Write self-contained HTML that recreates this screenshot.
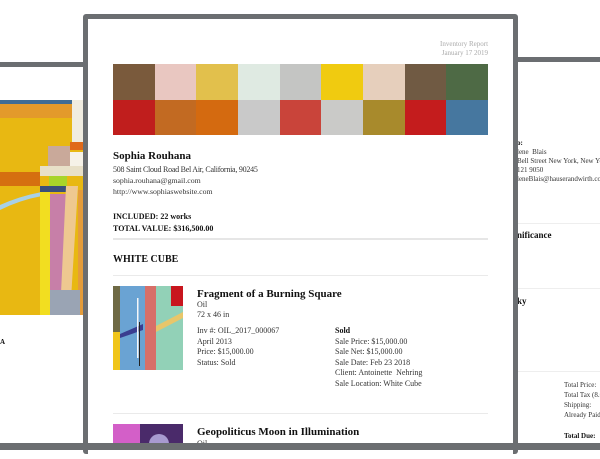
<!DOCTYPE html><html><head><style>
*{margin:0;padding:0;box-sizing:border-box}
body{width:600px;height:450px;overflow:hidden;background:#fff;position:relative;font-family:"Liberation Serif","DejaVu Serif",serif;color:#222}
.a{position:absolute}
.t{position:absolute;white-space:nowrap;font-size:8px;color:#333}
.b{font-weight:bold;color:#111}
</style></head><body>
<!-- left page -->
<div class="a" style="left:0;top:62px;width:86px;height:5px;background:#6b6e71"></div>
<svg class="a" style="left:0;top:100px" width="84" height="215" viewBox="0 0 84 215">
<rect width="84" height="215" fill="#e8b812"/>
<rect y="0" width="72" height="4" fill="#3f6c95"/>
<rect y="4" width="72" height="14" fill="#e39a2b"/>
<rect x="72" y="0" width="12" height="42" fill="#f0ece0"/>
<rect x="70" y="42" width="14" height="8" fill="#e06a1a"/>
<rect x="48" y="46" width="22" height="20" fill="#c9a99a"/>
<rect x="70" y="52" width="14" height="14" fill="#f6f2e8"/>
<rect x="40" y="66" width="44" height="10" fill="#e8e0c8"/>
<rect x="49" y="76" width="18" height="10" fill="#a8d42a"/>
<rect y="72" width="40" height="14" fill="#d56f10"/>
<rect x="40" y="86" width="27" height="6" fill="#3a4f7a"/>
<path d="M0 105 Q20 96 42 92 L42 96 Q20 100 0 110Z" fill="#a8d0e6"/>
<rect x="40" y="92" width="10" height="123" fill="#f2de20"/>
<path d="M50 94 L66 94 L62 215 L50 215Z" fill="#c77fa8"/>
<path d="M66 86 L78 86 L70 215 L60 215Z" fill="#eec890"/>
<rect x="78" y="90" width="6" height="125" fill="#e49c3a"/>
<rect x="50" y="190" width="30" height="25" fill="#9aa4b4"/>
</svg>
<div class="t b" style="left:0;top:338px;font-size:7px">A</div>
<!-- right page -->
<div class="a" style="left:515px;top:57px;width:85px;height:5px;background:#6b6e71"></div>
<div class="t b" style="left:517px;top:139px;font-size:7px">o:</div>
<div class="t" style="left:517px;top:148px;font-size:7px">lene&nbsp; Blais</div>
<div class="t" style="left:517px;top:157px;font-size:7px">Bell Street New York, New York,</div>
<div class="t" style="left:517px;top:166px;font-size:7px">121 9050</div>
<div class="t" style="left:517px;top:175px;font-size:7px">leneBlais@hauserandwirth.com</div>
<div class="a" style="left:518px;top:223px;width:82px;height:1px;background:#eee"></div>
<div class="t b" style="left:517px;top:230px;font-size:9px">nificance</div>
<div class="a" style="left:518px;top:288px;width:82px;height:1px;background:#eee"></div>
<div class="t b" style="left:517px;top:296px;font-size:9px">ky</div>
<div class="a" style="left:518px;top:371px;width:82px;height:1px;background:#eee"></div>
<div class="t" style="left:564px;top:381px;font-size:7px">Total Price:</div>
<div class="t" style="left:564px;top:391px;font-size:7px">Total Tax (8.0</div>
<div class="t" style="left:564px;top:401px;font-size:7px">Shipping:</div>
<div class="t" style="left:564px;top:411px;font-size:7px">Already Paid:</div>
<div class="t b" style="left:564px;top:432px;font-size:7px">Total Due:</div>
<!-- center page -->
<div class="a" style="left:83px;top:14px;width:435px;height:440px;background:#6b6e71;border-radius:3px"></div>
<div class="a" style="left:88px;top:19px;width:425px;height:440px;background:#fff"></div>
<div class="t" style="left:440px;top:40px;font-size:7px;color:#aaa;text-align:right;width:48px;line-height:9px">Inventory Report<br>January 17 2019</div>
<div class="a" style="left:113px;top:64px;width:375px;height:71px;display:grid;grid-template-columns:repeat(9,1fr);grid-template-rows:1fr 1fr">
<div style="background:#7a5a3c"></div><div style="background:#e9c7c1"></div><div style="background:#e2c04c"></div><div style="background:#dfeae2"></div><div style="background:#c4c5c3"></div><div style="background:#f0cb10"></div><div style="background:#e6cfbc"></div><div style="background:#705a43"></div><div style="background:#4e6a45"></div>
<div style="background:#c01e1d"></div><div style="background:#c26a22"></div><div style="background:#d46a10"></div><div style="background:#c9c9c9"></div><div style="background:#c9443a"></div><div style="background:#cacac8"></div><div style="background:#a88a2c"></div><div style="background:#c41c1d"></div><div style="background:#46779f"></div>
</div>
<div class="t b" style="left:113px;top:150px;font-size:11px">Sophia Rouhana</div>
<div class="t" style="left:113px;top:165px;letter-spacing:-0.25px">508 Saint Cloud Road Bel Air, California, 90245</div>
<div class="t" style="left:113px;top:176px;font-size:7.8px">sophia.rouhana@gmail.com</div>
<div class="t" style="left:113px;top:187px;font-size:7.8px">http://www.sophiaswebsite.com</div>
<div class="t b" style="left:113px;top:212px">INCLUDED: 22 works</div>
<div class="t b" style="left:113px;top:224px">TOTAL VALUE: $316,500.00</div>
<div class="a" style="left:113px;top:238px;width:375px;height:2px;background:#e6e6e6"></div>
<div class="t b" style="left:113px;top:254px;font-size:10px">WHITE CUBE</div>
<div class="a" style="left:113px;top:275px;width:375px;height:1px;background:#eaeaea"></div>
<svg class="a" style="left:113px;top:286px" width="70" height="84" viewBox="0 0 70 84">
<rect width="70" height="84" fill="#6aa3d3"/>
<rect width="7" height="84" fill="#6f6a45"/><rect y="46" width="7" height="38" fill="#f0c51a"/>
<rect x="32" width="11" height="84" fill="#d76f68"/>
<rect x="43" width="27" height="84" fill="#92d1b7"/>
<rect x="58" width="12" height="20" fill="#c8161e"/>
<path d="M43 40 L70 26 L70 32 L43 46Z" fill="#e8c66a"/>
<path d="M7 48 L30 38 L30 44 L7 52Z" fill="#3a3d90"/>
<rect x="24" y="12" width="1.5" height="60" fill="#f4f6f8"/><rect x="26" y="36" width="1" height="44" fill="#222"/>
</svg>
<div class="t b" style="left:197px;top:288px;font-size:11px">Fragment of a Burning Square</div>
<div class="t" style="left:197px;top:300px">Oil</div>
<div class="t" style="left:197px;top:310px">72 x 46 in</div>
<div class="t" style="left:197px;top:326px">Inv #: OIL_2017_000067</div>
<div class="t" style="left:197px;top:337px">April 2013</div>
<div class="t" style="left:197px;top:347px">Price: $15,000.00</div>
<div class="t" style="left:197px;top:358px">Status: Sold</div>
<div class="t b" style="left:335px;top:326px">Sold</div>
<div class="t" style="left:335px;top:337px">Sale Price: $15,000.00</div>
<div class="t" style="left:335px;top:347px">Sale Net: $15,000.00</div>
<div class="t" style="left:335px;top:358px">Sale Date: Feb 23 2018</div>
<div class="t" style="left:335px;top:368px">Client: Antoinette&nbsp; Nehring</div>
<div class="t" style="left:335px;top:379px">Sale Location: White Cube</div>
<div class="a" style="left:113px;top:413px;width:375px;height:1px;background:#eaeaea"></div>
<svg class="a" style="left:113px;top:424px" width="70" height="20"><rect width="27" height="20" fill="#d35fc8"/><rect x="27" width="43" height="20" fill="#4a2a6a"/><circle cx="46" cy="20" r="10" fill="#a89ad0"/></svg>
<div class="t b" style="left:197px;top:426px;font-size:11px">Geopoliticus Moon in Illumination</div>
<div class="t" style="left:197px;top:439px">Oil</div>
<!-- bottom bar -->
<div class="a" style="left:0;top:443px;width:600px;height:7px;background:#6b6e71"></div>
</body></html>
